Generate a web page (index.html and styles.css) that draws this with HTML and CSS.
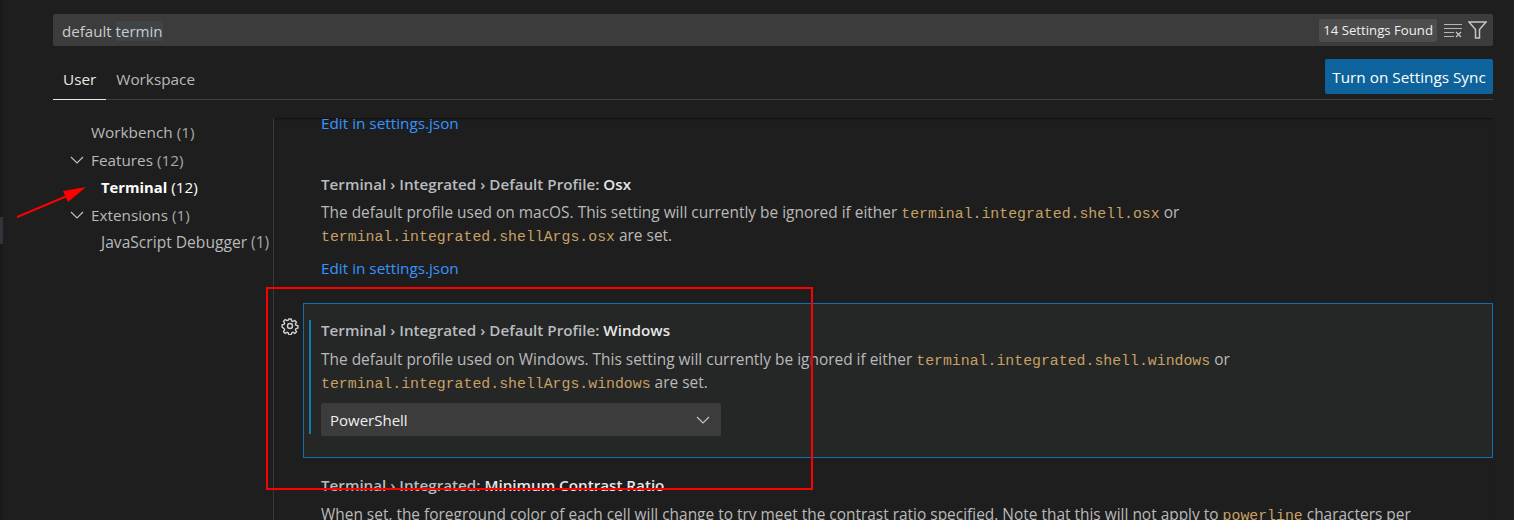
FILE: index.html
```html
<!DOCTYPE html>
<html lang="en">
<head>
<meta charset="utf-8">
<title>Settings</title>
<link rel="stylesheet" href="styles.css">
</head>
<body>
<div class="strip"><div class="edge"></div></div>
<div class="page">
  <div class="search">
    <span class="query"><span>default </span><span class="hl">termin</span></span>
    <span class="count">14 Settings Found</span>
    <svg class="sicon" width="19" height="15" viewBox="0 0 19 15"><path d="M0 1.500h18M0 5.500h18M0 9.500h10M0 13.500h10" stroke="#b4b4b4" stroke-width="1.200" fill="none"/><path d="M12 9l5 5M17 9l-5 5" stroke="#c5c5c5" stroke-width="1.300" fill="none"/></svg>
    <svg class="sicon" width="19" height="18" viewBox="0 0 19 18"><path d="M1 1h17l-6.500 7.500v8.500h-4v-8.500z" stroke="#c5c5c5" stroke-width="1.500" fill="none"/></svg>
  </div>
  <div class="tabs-row">
    <div class="tabs">
      <span class="tab active">User</span>
      <span class="tab">Workspace</span>
    </div>
    <button class="sync">Turn on Settings Sync</button>
  </div>
  <div class="split">
    <nav class="tree">
      <div class="node l1">Workbench <span class="n">(1)</span></div>
      <div class="node l1"><svg class="chev" width="14" height="8" viewBox="0 0 14 8"><path d="M1 1l6 6 6-6" stroke="#c5c5c5" fill="none" stroke-width="1.100"/></svg>Features <span class="n">(12)</span></div>
      <div class="node l2 sel"><b>Terminal</b> <span>(12)</span></div>
      <div class="node l1"><svg class="chev" width="14" height="8" viewBox="0 0 14 8"><path d="M1 1l6 6 6-6" stroke="#c5c5c5" fill="none" stroke-width="1.100"/></svg>Extensions <span class="n">(1)</span></div>
      <div class="node l2 wide">JavaScript Debugger <span class="n">(1)</span></div>
    </nav>
    <main class="list">
      <div class="item cut"><a class="link">Edit in settings.json</a></div>
      <section class="item osx">
        <h3 class="title">Terminal › Integrated › Default Profile: <b>Osx</b></h3>
        <p class="desc">The default profile used on macOS. This setting will currently be ignored if either <code>terminal.integrated.shell.osx</code> or<br><code>terminal.integrated.shellArgs.osx</code> are set.</p>
        <a class="link">Edit in settings.json</a>
      </section>
      <div class="focus-wrap">
        <svg class="gear" width="18" height="18" viewBox="0 0 18 18"><circle cx="9" cy="9" r="2.500" fill="none" stroke="#d0d0d0" stroke-width="1.400"/><path d="M7.600 1h2.800l.5 2.300 1.500.6 2-1.300 2 2-1.300 2 .6 1.500 2.300.5v2.800l-2.300.5-.6 1.500 1.300 2-2 2-2-1.300-1.500.6-.5 2.300H7.600l-.5-2.300-1.500-.6-2 1.300-2-2 1.300-2-.6-1.500L0 10.400V7.600l2.300-.5.600-1.500-1.300-2 2-2 2 1.300 1.500-.6z" transform="translate(1.100 1.100) scale(.88)" fill="none" stroke="#d0d0d0" stroke-width="1.600" stroke-linejoin="round"/></svg>
        <section class="focus">
          <div class="marker">
            <h3 class="title">Terminal › Integrated › Default Profile: <b>Windows</b></h3>
            <p class="desc">The default profile used on Windows. This setting will currently be ignored if either <code>terminal.integrated.shell.windows</code> or<br><code>terminal.integrated.shellArgs.windows</code> are set.</p>
            <div class="select">PowerShell<svg width="14" height="8" viewBox="0 0 14 8"><path d="M1 1l6 6 6-6" stroke="#c5c5c5" fill="none" stroke-width="1.200"/></svg></div>
          </div>
        </section>
      </div>
      <section class="item contrast">
        <h3 class="title">Terminal › Integrated: <b>Minimum Contrast Ratio</b></h3>
        <p class="desc">When set, the foreground color of each cell will change to try meet the contrast ratio specified. Note that this will not apply to <code>powerline</code> characters per</p>
      </section>
    </main>
  </div>
</div>
<div class="redbox"></div>
<svg class="arrow" width="70" height="34" viewBox="0 0 70 34"><path d="M0 31L50 10" stroke="#f00" stroke-width="2"/><path d="M69 1L46 5L51 16z" fill="#f00"/></svg>
</body>
</html>
```
FILE: styles.css
```css
* { box-sizing: border-box; }
html, body { margin: 0; height: 520px; overflow: hidden; }
body { background: #1e1e1e; color: #cccccc; font-family: "Open Sans", "Noto Sans", sans-serif; font-size: 15px; position: relative; }
.strip { position: absolute; left: 0; top: 0; width: 3px; height: 520px; background: #1a1a1a; padding-top: 217px; }
.edge { height: 27px; background: #33343b; }
.page { padding: 14px 21px 0 53px; height: 520px; display: flex; flex-direction: column; }
.search { height: 32px; background: #3c3c3c; border-radius: 2px; display: flex; align-items: center; padding: 0 6px 0 9px; flex: none; }
.query { flex: 1; font-size: 15.100px; color: #cccccc; padding-top: 1px; }
.hl { background: #3f4449; }
.count { background: #4d4d4d; color: #f0f0f0; font-size: 13.200px; line-height: 22px; padding: 0 4px; border-radius: 2px; height: 23px; margin-right: 2px; white-space: nowrap; }
.sicon { display: block; margin-left: 5px; }
.sicon + .sicon { margin-left: 5px; }
.tabs-row { display: flex; height: 54px; align-items: flex-start; justify-content: space-between; border-bottom: 1px solid #3f3f3f; flex: none; position: relative; }
.tabs { display: flex; margin-top: 13px; }
.tab { height: 41px; line-height: 41px; padding: 0 10.500px; font-size: 15.300px; color: #b9b9b9; }
.tab.active { color: #e7e7e7; border-bottom: 1px solid #e7e7e7; padding: 0 9.500px 0 10px; }
.sync { position: absolute; right: 0; top: 13px; width: 168px; height: 35px; background: #0e639c; border: 0; border-radius: 2px; color: #ffffff; font: 15.300px "Open Sans", sans-serif; padding: 0; white-space: nowrap; }
.split { display: flex; flex: 1; min-height: 0; }
.tree { width: 220px; flex: none; padding-top: 19px; }
.node { height: 27.500px; line-height: 27px; white-space: nowrap; color: #b9b9b9; font-size: 15.300px; position: relative; }
.node .n { color: #a8a8a8; }
.l1 { padding-left: 38px; }
.l2 { padding-left: 48px; }
.wide { font-size: 15.600px; }
.chev { position: absolute; left: 17px; top: 9px; }
.sel { color: #ffffff; }
.sel b { font-weight: 700; font-size: 14.800px; }
.list { flex: 1; display: flow-root; border-left: 1px solid #3a3a3a; position: relative; margin-top: 18px; box-shadow: inset 0 2px 2px -1px #111; }
.item { padding-left: 47px; }
.cut { height: 57px; }
.cut .link { line-height: 12px; margin-top: -1px; }
.link { color: #3794ff; font-size: 15.300px; line-height: 20px; display: block; }
.title { margin: 0; font-size: 15.200px; font-weight: 600; color: #b9bcbf; line-height: 20px; white-space: nowrap; }
.title b { font-weight: 600; color: #e7e7e7; }
.desc { margin: 7px 0 0; font-size: 15.450px; line-height: 22.500px; color: #b9b9b9; white-space: nowrap; }
code { font-family: "Liberation Mono", monospace; font-size: 14.850px; line-height: 1; color: #c8a064; }
.osx { height: 129px; }
.osx .link { margin-top: 12px; }
.focus-wrap { position: relative; padding-left: 29px; }
.gear { position: absolute; left: 7px; top: 14px; }
.focus { background: #252626; border: 1px solid #0e70b0; height: 155px; padding: 18px 20px 0 5px; }
.marker { border-left: 2px solid #0f7fae; padding-left: 10px; height: 114px; }
.marker .title { margin-top: -2px; }
.marker .desc { margin-top: 8px; }
.select { margin-top: 10px; width: 400px; height: 33px; background: #3c3c3c; border-radius: 2px; display: flex; justify-content: space-between; align-items: center; padding: 0 11px 0 9px; font-size: 15px; color: #f0f0f0; }
.contrast { margin-top: 17px; }
.contrast .desc { line-height: 12px; margin-top: 13px; }
.redbox { position: absolute; left: 266px; top: 287px; width: 547px; height: 203px; border: 2px solid #f00; pointer-events: none; }
.arrow { position: absolute; left: 17px; top: 186px; }
```
